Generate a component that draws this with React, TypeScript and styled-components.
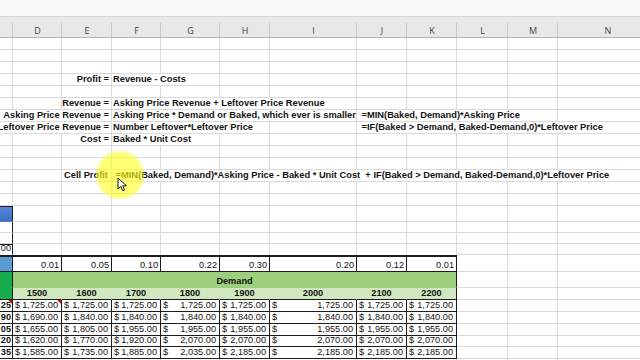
import React from 'react';
import styled, { createGlobalStyle, css } from 'styled-components';

// column widths (C is only partly visible at the left edge)
const COLS = [13, 49, 50, 49, 59, 50, 87, 50, 50, 51, 50, 100];
const LETTERS = ['', 'D', 'E', 'F', 'G', 'H', 'I', 'J', 'K', 'L', 'M', 'N'];

const GRID = '#dadada';
const INK = '#1c1c1c';

const HEIGHTS = [...Array(14).fill(12), 16, 11, 11, 11, 17, 16, 12, 12, 12, 12, 11, 12, 12];

type Edge = 'grid' | 'dark' | 'none';
type Align = 'left' | 'right' | 'center' | 'split';

const JUSTIFY: Record<Align, string> = {
  left: 'flex-start',
  right: 'flex-end',
  center: 'center',
  split: 'space-between',
};

const edge = (v?: Edge) =>
  v === 'dark' ? `1px solid ${INK}` : v === 'none' ? '1px solid transparent' : `1px solid ${GRID}`;

const GlobalStyle = createGlobalStyle`
  html, body {
    margin: 0;
    padding: 0;
    background: #fff;
    overflow: hidden;
  }
  body {
    font-family: "Liberation Sans", Arial, sans-serif;
  }
`;

const Screen = styled.div`
  position: relative;
  width: 640px;
  height: 360px;
  overflow: hidden;
  background: #fff;
`;

const TopStrip = styled.div`
  height: 16px;
  background: #f9f9f9;
  border-bottom: 1px solid #d6d6d6;
`;

const HeaderRow = styled.div`
  display: flex;
  height: 20px;
  background: #e8e8e8;
  border-bottom: 1px solid #b4b4b4;
`;

const ColHead = styled.div<{ $w: number }>`
  position: relative;
  flex: none;
  box-sizing: border-box;
  width: ${p => p.$w}px;
  display: flex;
  align-items: center;
  justify-content: center;
  padding-top: 6px;
  font-family: "Open Sans", "Noto Sans", sans-serif;
  font-size: 9px;
  color: #454545;

  &::after {
    content: '';
    position: absolute;
    right: 0;
    top: 6px;
    bottom: 0;
    width: 1px;
    background: #c6c6c6;
  }
`;

const SheetRow = styled.div<{ $h: number }>`
  display: flex;
  height: ${p => p.$h}px;
`;

interface CellProps {
  $w: number;
  $align?: Align;
  $bg?: string;
  $r?: Edge;
  $b?: Edge;
  $t?: number;
  $bold?: boolean;
  $note?: boolean;
  $padR?: number;
}

const Cell = styled.div<CellProps>`
  position: relative;
  flex: none;
  box-sizing: border-box;
  width: ${p => p.$w}px;
  height: 100%;
  display: flex;
  align-items: flex-end;
  justify-content: ${p => JUSTIFY[p.$align ?? 'left']};
  padding: 0 ${p => p.$padR ?? 2}px 0 2px;
  background: ${p => p.$bg ?? 'transparent'};
  border-right: ${p => edge(p.$r)};
  border-bottom: ${p => edge(p.$b)};
  border-top: ${p => (p.$t ? `${p.$t}px solid ${INK}` : 'none')};
  font-size: 9.2px;
  line-height: 11px;
  color: #141414;
  font-weight: ${p => (p.$bold ? 700 : 400)};
  white-space: pre;

  ${p =>
    p.$note &&
    css`
      &::after {
        content: '';
        position: absolute;
        top: 0;
        right: 0;
        border-top: 4px solid #d11;
        border-left: 4px solid transparent;
      }
    `}
`;

// text that runs over its neighbours, as Excel does
const Spill = styled.span`
  position: relative;
  z-index: 1;
  background: #fff;
  font-size: 9.3px;
  font-weight: 700;
  color: #141414;
`;

const Highlight = styled.div`
  position: absolute;
  left: 96px;
  top: 151px;
  width: 48px;
  height: 48px;
  border-radius: 50%;
  z-index: 5;
  background: radial-gradient(
    circle,
    rgba(255, 255, 30, 0.66) 0%,
    rgba(255, 255, 30, 0.6) 62%,
    rgba(255, 255, 30, 0) 100%
  );
`;

const Pointer = styled.svg`
  position: absolute;
  left: 117px;
  top: 177px;
  z-index: 6;
`;

const formulaRows: Record<number, { label: string; labelLeft?: boolean; text: string; side?: string }> = {
  3: { label: 'Profit =', text: 'Revenue - Costs' },
  5: { label: 'Revenue =', text: 'Asking Price Revenue + Leftover Price Revenue' },
  6: {
    label: 'Asking Price Revenue =',
    text: 'Asking Price * Demand or Baked, which ever is smaller',
    side: ' =MIN(Baked, Demand)*Asking Price',
  },
  7: {
    label: 'Leftover Price Revenue =',
    text: 'Number Leftover*Leftover Price',
    side: ' =IF(Baked > Demand, Baked-Demand,0)*Leftover Price',
  },
  8: { label: 'Cost =', text: 'Baked * Unit Cost' },
  11: {
    label: 'Cell Profit',
    labelLeft: true,
    text: ' =MIN(Baked, Demand)*Asking Price - Baked * Unit Cost  + IF(Baked > Demand, Baked-Demand,0)*Leftover Price',
  },
};

const DEMAND = [1500, 1600, 1700, 1800, 1900, 2000, 2100, 2200];
const PROBS = ['0.01', '0.05', '0.10', '0.22', '0.30', '0.20', '0.12', '0.01'];
const PROFITS: [string, number[]][] = [
  ['25', [1725, 1725, 1725, 1725, 1725, 1725, 1725, 1725]],
  ['90', [1690, 1840, 1840, 1840, 1840, 1840, 1840, 1840]],
  ['05', [1655, 1805, 1955, 1955, 1955, 1955, 1955, 1955]],
  ['20', [1620, 1770, 1920, 2070, 2070, 2070, 2070, 2070]],
  ['35', [1585, 1735, 1885, 2035, 2185, 2185, 2185, 2185]],
];

const money = (n: number) => n.toLocaleString('en-US', { minimumFractionDigits: 2, maximumFractionDigits: 2 });

const blanks = (from: number, to = COLS.length) =>
  COLS.slice(from, to).map((w, i) => <Cell key={`b${from + i}`} $w={w} />);

const TABLE_W = COLS.slice(1, 9).reduce((a, b) => a + b, 0);

const renderRow = (i: number) => {
  const f = formulaRows[i];
  if (f) {
    return (
      <>
        {blanks(0, 2)}
        <Cell $w={COLS[2]} $align={f.labelLeft ? 'left' : 'right'}>
          <Spill>{f.label}</Spill>
        </Cell>
        <Cell $w={COLS[3]} $padR={0} style={{ paddingLeft: 1 }}>
          <Spill>{f.text}</Spill>
        </Cell>
        {blanks(4, 7)}
        <Cell $w={COLS[7]}>{f.side && <Spill>{f.side}</Spill>}</Cell>
        {blanks(8)}
      </>
    );
  }
  if (i < 14) return blanks(0);

  if (i >= 14 && i <= 17) {
    return (
      <>
        <Cell
          $w={COLS[0]}
          $r="dark"
          $b={i === 14 || i === 17 ? 'none' : 'grid'}
          $t={i === 14 || i === 17 ? 1 : 0}
          $bg={i === 14 ? 'linear-gradient(#5584d6, #3f6fc4)' : undefined}
          $align="right"
          $padR={1}
        >
          {i === 17 ? '00' : ''}
        </Cell>
        {COLS.slice(1).map((w, c) => (
          <Cell key={c} $w={w} $b={i === 17 && c < 8 ? 'none' : 'grid'} />
        ))}
      </>
    );
  }

  if (i === 18) {
    return (
      <>
        <Cell $w={COLS[0]} $t={2} $r="dark" $b="dark" $bg="#5b9bd5" />
        {PROBS.map((p, c) => (
          <Cell key={c} $w={COLS[c + 1]} $t={2} $r="dark" $b="dark" $align="right">
            {p}
          </Cell>
        ))}
        {blanks(9)}
      </>
    );
  }

  if (i === 19) {
    return (
      <>
        <Cell $w={COLS[0]} $r="dark" $b="none" $bg="#17ad4f" />
        <Cell $w={TABLE_W} $r="dark" $b="none" $bg="#9dd07c" $align="center" $bold>
          Demand
        </Cell>
        {blanks(9)}
      </>
    );
  }

  if (i === 20) {
    return (
      <>
        <Cell $w={COLS[0]} $r="dark" $b="dark" $bg="#17ad4f" />
        {DEMAND.map((d, c) => (
          <Cell
            key={c}
            $w={COLS[c + 1]}
            $r={c === 7 ? 'dark' : 'none'}
            $b="dark"
            $bg="#d0e7bf"
            $align="center"
            $bold
          >
            {d}
          </Cell>
        ))}
        {blanks(9)}
      </>
    );
  }

  const data = PROFITS[i - 21];
  if (data) {
    const [tail, values] = data;
    return (
      <>
        <Cell $w={COLS[0]} $r="dark" $b="dark" $align="right" $bold $padR={1} $note={i === 21}>
          {tail}
        </Cell>
        {values.map((v, c) => (
          <Cell key={c} $w={COLS[c + 1]} $r="dark" $b="dark" $align="split" $padR={3} $note={i === 21 && c === 0}>
            <span>$</span>
            <span>{money(v)}</span>
          </Cell>
        ))}
        {blanks(9)}
      </>
    );
  }

  return blanks(0);
};

const App: React.FC = () => (
  <Screen>
    <GlobalStyle />
    <TopStrip />
    <HeaderRow>
      {COLS.map((w, c) => (
        <ColHead key={c} $w={w}>
          {LETTERS[c]}
        </ColHead>
      ))}
    </HeaderRow>

    {HEIGHTS.map((h, i) => (
      <SheetRow key={i} $h={h}>
        {renderRow(i)}
      </SheetRow>
    ))}

    <Highlight />
    <Pointer width="11" height="15" viewBox="0 0 11 15">
      <path d="M1 1 L1 12 L3.8 9.4 L5.8 13.8 L7.6 13 L5.7 8.8 L9.4 8.8 Z" fill="#fff" stroke="#111" strokeWidth="1" strokeLinejoin="round" />
    </Pointer>
  </Screen>
);

export default App;
